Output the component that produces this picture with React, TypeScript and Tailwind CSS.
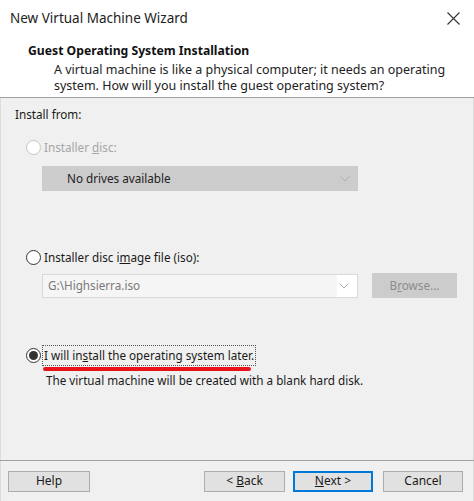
import React from "react";

function Radio({ checked, disabled }: { checked?: boolean; disabled?: boolean }) {
  return (
    <span
      className={
        "flex h-[15px] w-[15px] shrink-0 items-center justify-center rounded-full border bg-white " +
        (disabled ? "border-[#c4c4c4]" : "border-[#333333]")
      }
    >
      {checked && <span className="h-[9px] w-[9px] rounded-full bg-[#333333]" />}
    </span>
  );
}

function Chevron({ color }: { color: string }) {
  return (
    <svg width="10" height="6" viewBox="0 0 10 6">
      <path d="M0.5 0.5 L5 5 L9.5 0.5" fill="none" stroke={color} strokeWidth="1" />
    </svg>
  );
}

function Btn({ children, focus, w }: { children: React.ReactNode; focus?: boolean; w: string }) {
  return (
    <div
      className={
        "flex h-[21px] items-center justify-center bg-[#e1e1e1] text-[12px] text-[#1a1a1a] " +
        w +
        " " +
        (focus ? "border-2 border-[#0078d7]" : "border border-[#adadad]")
      }
    >
      <span className="whitespace-pre">{children}</span>
    </div>
  );
}

export default function App() {
  return (
    <div
      className="flex h-[501px] w-[474px] flex-col overflow-hidden bg-[#f0f0f0] text-[#1a1a1a]"
      style={{ fontFamily: '"Noto Sans", "Open Sans", sans-serif' }}
    >
      <div className="flex flex-col bg-white">
        <div className="flex h-[36px] items-center justify-between pl-[10px] pr-[14px]">
          <span className="text-[13.5px] text-[#222]">New Virtual Machine Wizard</span>
          <svg width="13" height="13" viewBox="0 0 13 13">
            <path d="M0.5 0.5 L12.5 12.5 M12.5 0.5 L0.5 12.5" stroke="#333" strokeWidth="1.1" />
          </svg>
        </div>
        <div className="flex flex-col pb-[3px] pl-[28px] pt-[6px]">
          <span className="text-[12.2px] font-bold leading-[18px] text-[#111]">
            Guest Operating System Installation
          </span>
          <span className="mt-[2px] pl-[26px] text-[12.5px] leading-[16px] text-[#222]">
            A virtual machine is like a physical computer; it needs an operating
            <br />
            system. How will you install the guest operating system?
          </span>
        </div>
      </div>
      <div className="h-px bg-[#a0a0a0]" />
      <div className="flex flex-1 flex-col border-l border-r border-[#dcdcdc] text-[11.7px]">
        <div className="pl-[14px] pt-[7px] leading-[18px]">Install from:</div>

        <div className="mt-[15px] flex items-center gap-[3px] pl-[25px] text-[#a6a6a6]">
          <Radio disabled />
          <span className="leading-[18px]">
            Installer <span className="underline">d</span>isc:
          </span>
        </div>
        <div className="ml-[41px] mt-[10px] flex h-[25px] w-[316px] items-center justify-between bg-[#cccccc] pl-[25px] pr-[8px]">
          <span className="text-[#222]">No drives available</span>
          <Chevron color="#b0b0b0" />
        </div>

        <div className="mt-[57px] flex items-center gap-[3px] pl-[25px]">
          <Radio />
          <span className="leading-[18px]">
            Installer disc i<span className="underline">m</span>age file (iso):
          </span>
        </div>
        <div className="mt-[7px] flex items-center pl-[41px]">
          <div className="flex h-[24px] w-[316px] items-center justify-between border border-[#d9d9d9] bg-white pr-[8px]">
            <span className="flex h-full w-[294px] items-center bg-[#f5f5f5] pl-[5px] text-[#7a7a7a]">
              G:\Highsierra.iso
            </span>
            <Chevron color="#b0b0b0" />
          </div>
          <div className="ml-[14px] flex h-[25px] w-[85px] items-center justify-center bg-[#cccccc] text-[#8c8c8c]">
            <span>
              B<span className="underline">r</span>owse...
            </span>
          </div>
        </div>

        <div className="mt-[47px] flex items-center gap-[1px] pl-[25px]">
          <Radio checked />
          <div className="relative">
            <span className="block border border-dotted border-[#555] px-px leading-[19px]">
              I will in<span className="underline">s</span>tall the operating system later.
            </span>
            <div className="absolute left-[1px] top-[22px] h-[4px] w-[208px] rounded-full bg-[#e8121a]" />
          </div>
        </div>
        <div className="mt-[5px] pl-[45px] leading-[18px]">
          The virtual machine will be created with a blank hard disk.
        </div>
      </div>
      <div className="h-px bg-[#a0a0a0]" />
      <div className="flex h-[40px] items-center border-l border-r border-[#dcdcdc] pl-[7px] pr-[10px]">
        <Btn w="w-[82px]">Help</Btn>
        <div className="flex-1" />
        <Btn w="w-[81px]">
          {"< "}
          <span className="underline">B</span>
          {"ack"}
        </Btn>
        <div className="w-[8px]" />
        <Btn focus w="w-[80px]">
          <span className="underline">N</span>
          {"ext >"}
        </Btn>
        <div className="w-[10px]" />
        <Btn w="w-[80px]">Cancel</Btn>
      </div>
    </div>
  );
}
